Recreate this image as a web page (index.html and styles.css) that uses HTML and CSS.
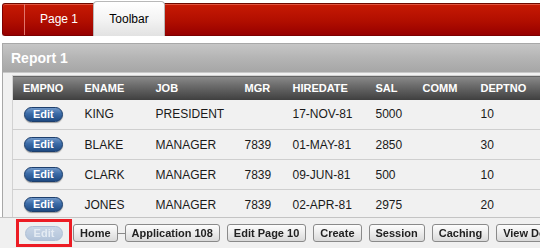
FILE: index.html
```html
<!DOCTYPE html>
<html lang="en">
<head>
  <meta charset="UTF-8" />
  <title>Toolbar</title>
  <link rel="stylesheet" href="styles.css">
</head>
<body>

  <nav class="tabbar">
    <span class="tab-start"></span>
    <a href="#" class="tab">Page 1</a>
    <a href="#" class="tab active">Toolbar</a>
  </nav>

  <section class="region">
    <div class="region-header">Report 1</div>
    <div class="region-body">
      <table class="report">
        <thead>
          <tr>
            <th>EMPNO</th>
            <th>ENAME</th>
            <th>JOB</th>
            <th>MGR</th>
            <th>HIREDATE</th>
            <th>SAL</th>
            <th>COMM</th>
            <th>DEPTNO</th>
          </tr>
        </thead>
        <tbody>
          <tr>
            <td><a href="#" class="btn-edit">Edit</a></td>
            <td>KING</td>
            <td>PRESIDENT</td>
            <td></td>
            <td>17-NOV-81</td>
            <td>5000</td>
            <td></td>
            <td>10</td>
          </tr>
          <tr>
            <td><a href="#" class="btn-edit">Edit</a></td>
            <td>BLAKE</td>
            <td>MANAGER</td>
            <td>7839</td>
            <td>01-MAY-81</td>
            <td>2850</td>
            <td></td>
            <td>30</td>
          </tr>
          <tr>
            <td><a href="#" class="btn-edit">Edit</a></td>
            <td>CLARK</td>
            <td>MANAGER</td>
            <td>7839</td>
            <td>09-JUN-81</td>
            <td>500</td>
            <td></td>
            <td>10</td>
          </tr>
          <tr>
            <td><a href="#" class="btn-edit">Edit</a></td>
            <td>JONES</td>
            <td>MANAGER</td>
            <td>7839</td>
            <td>02-APR-81</td>
            <td>2975</td>
            <td></td>
            <td>20</td>
          </tr>
        </tbody>
      </table>
    </div>
  </section>

  <!-- developer toolbar, pinned to the bottom of the window -->
  <div class="dev-toolbar">
    <span class="tb-current"><span class="btn-edit faded">Edit</span></span>
    <a href="#" class="tb-btn home">Home</a>
    <span class="tb-link"></span>
    <a href="#" class="tb-btn">Application 108</a>
    <a href="#" class="tb-btn">Edit Page 10</a>
    <a href="#" class="tb-btn">Create</a>
    <a href="#" class="tb-btn">Session</a>
    <a href="#" class="tb-btn">Caching</a>
    <a href="#" class="tb-btn">View Debug</a>
  </div>

</body>
</html>
```

FILE: styles.css
```css
body {
  margin: 0;
  background: #fff;
  font-family: "Liberation Sans", Arial, sans-serif;
  font-size: 12px;
  color: #1a1a1a;
  overflow: hidden;
}

a {
  text-decoration: none;
}

/* tabs */

.tabbar {
  display: flex;
  height: 31px;
  margin: 3px 0 0 2px;
  background: linear-gradient(#c71a04, #b10e00 55%, #970000);
  border-top: 1px solid #6e0a00;
  border-bottom: 1px solid #7d0000;
  border-left: 1px solid #7d0000;
  border-radius: 3px 0 0 3px;
  box-shadow: inset 0 1px 0 #e0553f;
}

.tab-start {
  width: 21px;
  border-right: 1px solid #e2756b;
}

.tab {
  width: 68px;
  text-align: center;
  line-height: 31px;
  color: #fff;
  font-size: 12px;
}

.tab.active {
  width: 70px;
  height: 34px;
  margin-top: -3px;
  line-height: 34px;
  color: #000;
  background: linear-gradient(#fff, #f4f4f4 50%, #e2e2e2);
  border: 1px solid #b8b8b8;
  border-bottom: none;
  border-radius: 4px 4px 0 0;
}

/* report region */

.region {
  margin: 7px 0 0 2px;
  border: 1px solid #a8a8a8;
  border-right: none;
  border-bottom: none;
  background: #f1f1f1;
}

.region-header {
  height: 28px;
  padding-left: 8px;
  line-height: 28px;
  font-size: 14px;
  font-weight: bold;
  color: #fff;
  background: linear-gradient(#c6c6c6, #b4b4b4 50%, #a6a6a6);
  border-bottom: 1px solid #c8c8c8;
}

.region-body {
  padding: 2px 0 0 9px;
}

.report {
  width: 530px;
  table-layout: fixed;
  border-collapse: collapse;
  border: 1px solid #d2d2d2;
}

.report th,
.report td {
  box-sizing: border-box;
  padding: 0 0 0 10px;
  text-align: left;
  white-space: nowrap;
}

.report th {
  height: 24px;
  font-size: 11px;
  font-weight: bold;
  color: #fff;
  background: linear-gradient(#8a8a8a, #666 45%, #3e3e3e);
}

.report td {
  height: 30px;
  border-bottom: 1px solid #cfcfcf;
}

.report th:nth-child(1) { width: 62px; }
.report th:nth-child(2) { width: 71px; }
.report th:nth-child(3) { width: 89px; }
.report th:nth-child(4) { width: 48px; }
.report th:nth-child(5) { width: 83px; }
.report th:nth-child(6) { width: 47px; }
.report th:nth-child(7) { width: 58px; }
.report th:nth-child(8) { width: 72px; }

.report td:first-child {
  padding-left: 11px;
}

.btn-edit {
  display: inline-block;
  height: 13px;
  padding: 0 8px;
  line-height: 13px;
  font-size: 11px;
  font-weight: bold;
  color: #fff;
  vertical-align: middle;
  background: linear-gradient(#6f97c8, #3a6aa6 45%, #1f4a82);
  border: 1px solid #1d3f6d;
  border-radius: 8px;
  box-shadow: 0 1px 1px rgba(0, 0, 0, 0.35);
}

.btn-edit.faded {
  color: #e4ebf3;
  background: linear-gradient(#c9d6e6, #b3c4da);
  border-color: #aebfd5;
  box-shadow: none;
}

/* developer toolbar */

.dev-toolbar {
  position: fixed;
  left: 0;
  right: 0;
  bottom: 0;
  display: flex;
  align-items: center;
  height: 30px;
  padding-left: 16px;
  background: #f0f0f0;
  border-top: 1px solid #c4c4c4;
  white-space: nowrap;
}

.dev-toolbar > * {
  flex-shrink: 0;
}

.tb-current {
  display: flex;
  align-items: center;
  justify-content: center;
  align-self: flex-end;
  width: 50px;
  height: 22px;
  margin-bottom: 1px;
  border: 3px solid #ec1c24;
}

.tb-btn {
  height: 16px;
  padding: 0 6px;
  margin-right: 7px;
  line-height: 16px;
  font-size: 11px;
  font-weight: bold;
  color: #222;
  background: linear-gradient(#fdfdfd, #ececec 50%, #d9d9d9);
  border: 1px solid #8a8a8a;
  border-radius: 3px;
}

.tb-btn.home {
  margin-left: 1px;
  margin-right: 0;
}

.tb-link {
  width: 7px;
  height: 1px;
  background: #8a8a8a;
}
```
